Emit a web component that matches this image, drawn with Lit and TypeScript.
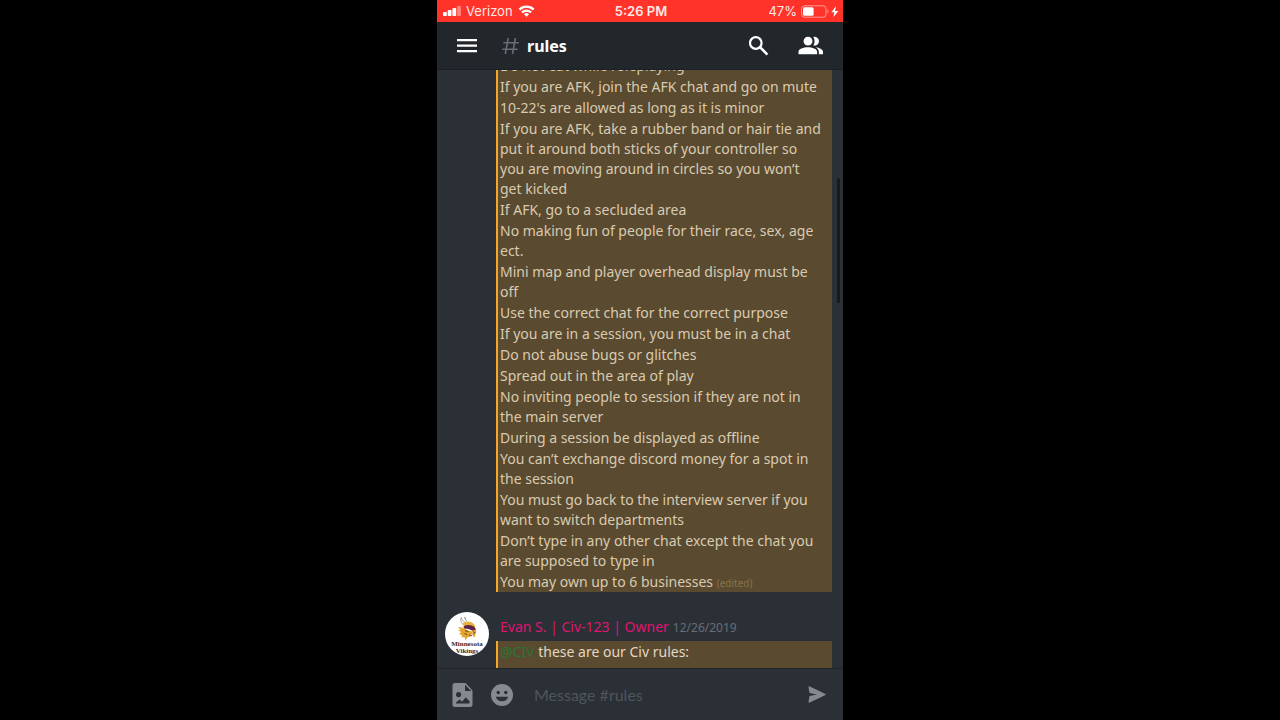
import { LitElement, html, css, svg } from "lit";
import { customElement, property } from "lit/decorators.js";

const RULES: string[] = [
  "Do not eat while roleplaying",
  "If you are AFK, join the AFK chat and go on mute",
  "10-22's are allowed as long as it is minor",
  "If you are AFK, take a rubber band or hair tie and\nput it around both sticks of your controller so\nyou are moving around in circles so you won’t\nget kicked",
  "If AFK, go to a secluded area",
  "No making fun of people for their race, sex, age\nect.",
  "Mini map and player overhead display must be\noff",
  "Use the correct chat for the correct purpose",
  "If you are in a session, you must be in a chat",
  "Do not abuse bugs or glitches",
  "Spread out in the area of play",
  "No inviting people to session if they are not in\nthe main server",
  "During a session be displayed as offline",
  "You can’t exchange discord money for a spot in\nthe session",
  "You must go back to the interview server if you\nwant to switch departments",
  "Don’t type in any other chat except the chat you\nare supposed to type in",
  "You may own up to 6 businesses",
];

@customElement("status-bar")
export class StatusBar extends LitElement {
  static styles = css`
    :host {
      display: grid;
      grid-template-columns: 1fr auto 1fr;
      align-items: center;
      height: 22px;
      padding: 0 4px 0 6px;
      background: #ff3329;
      color: #ffe9e6;
      font: 13px/22px Inter, "Liberation Sans", sans-serif;
    }
    .side {
      display: flex;
      align-items: center;
      gap: 5px;
    }
    .right {
      justify-content: flex-end;
      gap: 4px;
    }
    .time {
      font-weight: 600;
    }
    svg {
      display: block;
      flex: none;
    }
  `;
  render() {
    return html`
      <div class="side">
        <svg width="18" height="10" viewBox="0 0 18 10" fill="#fff">
          <rect x="0" y="6" width="3.8" height="4" rx="0.8" />
          <rect x="4.7" y="4" width="3.8" height="6" rx="0.8" />
          <rect x="9.4" y="2" width="3.8" height="8" rx="0.8" />
          <rect x="14.1" y="0" width="3.8" height="10" rx="0.8" opacity="0.4" />
        </svg>
        <span>Verizon</span>
        <svg width="17" height="12" viewBox="0 0 17 12" fill="none" stroke="#fff" stroke-width="2.3">
          <path d="M1.400 4.600a10 10 0 0 1 14.200 0" />
          <path d="M4 7.500a6.200 6.200 0 0 1 9 0" />
          <path d="M8.500 11.800 6 9.300a3.500 3.500 0 0 1 5 0z" fill="#fff" stroke="none" />
        </svg>
      </div>
      <span class="time">5:26 PM</span>
      <div class="side right">
        <span>47%</span>
        <svg width="38" height="13" viewBox="0 0 38 13">
          <rect x="0.5" y="0.8" width="24.5" height="11.4" rx="3" fill="none" stroke="#fff" stroke-opacity="0.5" />
          <rect x="2" y="2.3" width="10.6" height="8.4" rx="1.5" fill="#fff" />
          <path d="M26.4 4.6v3.8c1.5-.5 1.5-3.3 0-3.8z" fill="#fff" opacity="0.5" />
          <path d="M35 1 30.400 7.200h2.900l-1 5L37.400 6h-3.300z" fill="#fff" />
        </svg>
      </div>
    `;
  }
}

@customElement("channel-header")
export class ChannelHeader extends LitElement {
  @property() channel = "";
  static styles = css`
    :host {
      display: flex;
      align-items: center;
      height: 48px;
      padding: 0 19px;
      background: #22272b;
      border-bottom: 1px solid #1c1f23;
      box-sizing: border-box;
    }
    button {
      padding: 0;
      border: 0;
      background: none;
      color: #fff;
      cursor: pointer;
    }
    svg {
      display: block;
    }
    .hash {
      margin-left: 24px;
    }
    h1 {
      flex: 1;
      margin: 0 0 0 7px;
      color: #fff;
      font: 700 16px/20px "Noto Sans", "Open Sans", sans-serif;
    }
    .people {
      margin-left: 29px;
    }
  `;
  render() {
    return html`
      <button aria-label="Open menu">
        <svg width="22" height="16" viewBox="0 0 22 16" fill="#fff">
          <path d="M1 1h20v2.200H1zM1 6.500h20v2.200H1zM1 12h20v2.200H1z" />
        </svg>
      </button>
      <svg class="hash" width="18" height="18" viewBox="0 0 18 18" fill="none" stroke="#686d75" stroke-width="1.6">
        <path d="M6.2 1 3.3 17M13.4 1 10.5 17M1.4 5.800h15.400M.2 12.200h15.400" />
      </svg>
      <h1>${this.channel}</h1>
      <button aria-label="Search">
        <svg width="20" height="20" viewBox="0 0 20 20" fill="none" stroke="#fff">
          <circle cx="6.800" cy="7" r="5.800" stroke-width="2.2" />
          <path d="m11 11.200 7.400 7.400" stroke-width="2.600" />
        </svg>
      </button>
      <button class="people" aria-label="Member list">
        <svg width="26" height="20" viewBox="0 0 26 20" fill="#fff">
          <circle cx="10" cy="5.2" r="4.4" />
          <path d="M.5 18.200v-2.400c0-3 5-4.600 9.300-4.600s9.300 1.600 9.300 4.600v2.400z" />
          <path d="M15.300 1a4.400 4.400 0 1 1 0 8.400c1.700-2.500 1.700-5.900 0-8.400z" />
          <path d="M17.800 11.200c3.400.5 7.200 2 7.200 4.600v2.400h-4.200v-2.400c0-2-1.100-3.500-3-4.600z" />
        </svg>
      </button>
    `;
  }
}

@customElement("chat-log")
export class ChatLog extends LitElement {
  static styles = css`
    :host {
      position: relative;
      display: flex;
      flex-direction: column;
      justify-content: flex-end;
      overflow: hidden;
      background: #2a3036;
      color: #d9cbb2;
      font: 14px/20px "Noto Sans", "Open Sans", sans-serif;
    }
    .message {
      display: grid;
      grid-template-columns: 50px 1fr;
      column-gap: 1px;
      flex: none;
      padding: 0 11px 0 8px;
    }
    .next {
      padding-top: 20px;
    }
    .body {
      grid-column: 2;
      min-width: 0;
    }
    .mention {
      border-left: 2px solid #f5a72a;
      background: #5a4a2f;
      padding-left: 2px;
    }
    .rules {
      display: grid;
      row-gap: 1px;
      margin: 0;
      padding-top: 0;
      padding-bottom: 0;
      padding-right: 0;
      list-style: none;
    }
    .rules li {
      white-space: pre-line;
    }
    .edited {
      color: #877350;
      font-size: 10px;
      line-height: 10px;
    }
    .avatar {
      display: block;
      width: 44px;
      height: 44px;
    }
    .author {
      display: flex;
      align-items: baseline;
      gap: 4px;
      margin: 5px 0 3px 4px;
    }
    .name {
      color: #e0136f;
      font-weight: 400;
      font-size: 14px;
      margin: 0;
    }
    time {
      color: #686e76;
      font-size: 12px;
    }
    p {
      margin: 0;
    }
    .last {
      padding-top: 1px;
      padding-bottom: 6px;
      color: #e2d8c5;
    }
    .role {
      color: #2a7436;
      text-decoration: none;
    }
    .thumb {
      position: absolute;
      top: 18%;
      right: 3px;
      width: 3px;
      height: 21%;
      min-height: 24px;
      border-radius: 2px;
      background: #171a1e;
    }
  `;

  private avatar() {
    return html`<svg class="avatar" viewBox="0 0 44 44" role="img" aria-label="Minnesota Vikings">
      <circle cx="22" cy="22" r="22" fill="#fff" />
      ${svg`
        <path d="M16.200 5.500c-1.200 2.700-.4 5.600 2.400 7.200l3.200-2.200c-2.500.2-4.600-1.600-5.600-5z" fill="#f7f5f2" stroke="#777" stroke-width=".6" />
        <path d="M19.800 5c.2 1.800.8 2.800 1.800 3.800" fill="none" stroke="#555" stroke-width=".8" />
        <path d="M17 12.500c3-4 9-4.200 12.700.5l1.600 6.500-1.600 6-2-1.500-1-7z" fill="#e9b03a" />
        <path d="M18.500 14.200c3.500-1.800 8-1.400 11.300 1l.8 2.800-3.600.6-3.500-1.600-4.500-.6z" fill="#612646" />
        <path d="M13 15.500c2-.3 3.500-.1 5.500.6l2.600 1.400 3 1.600 2.600.2.600 3-2.400.4.800 2.600-2.600-.6-2.600 3.600-1-3.400-3.200.6 1-2.300-3.300-1.300 2.200-1.800-3-1.600 2.400-.7z" fill="#e3a52e" />
        <path d="m20 18.600 3.500 1M19.500 21.500l2.600 1.200M28 19.500l1.800 1.200-1.600 1.600M24 23l3 .6" fill="none" stroke="#5b3a25" stroke-width=".9" />
        <text x="22" y="34" text-anchor="middle" font-family="Liberation Serif, serif" font-weight="700" font-size="7" fill="#40282f">Minnesota</text>
        <text x="22" y="40.500" text-anchor="middle" font-family="Liberation Serif, serif" font-weight="700" font-size="7" fill="#40282f">Vikings</text>
      `}
    </svg>`;
  }

  render() {
    const last = RULES.length - 1;
    return html`
      <article class="message">
        <ul class="body mention rules">
          ${RULES.map(
            (rule, i) =>
              html`<li>${rule}${i === last ? html` <span class="edited">(edited)</span>` : ""}</li>`
          )}
        </ul>
      </article>
      <article class="message next">
        ${this.avatar()}
        <div class="body">
          <header class="author">
            <h2 class="name">Evan S. | Civ-123 | Owner</h2>
            <time datetime="2019-12-26">12/26/2019</time>
          </header>
          <p class="mention last"><a class="role" href="#civ">@CIV</a> these are our Civ rules:</p>
        </div>
      </article>
      <div class="thumb"></div>
    `;
  }
}

@customElement("message-composer")
export class MessageComposer extends LitElement {
  @property() channel = "";
  static styles = css`
    form {
      display: flex;
      align-items: center;
      height: 52px;
      padding: 0 17px 0 15px;
      box-sizing: border-box;
      border-top: 1px solid #202328;
      background: #2a3036;
    }
    button {
      padding: 0;
      border: 0;
      background: none;
      cursor: pointer;
    }
    svg {
      display: block;
    }
    .emoji {
      margin-left: 18px;
    }
    input {
      flex: 1;
      min-width: 0;
      margin-left: 21px;
      padding: 0;
      border: 0;
      outline: 0;
      background: none;
      color: #dcddde;
      font: 16px/20px Lato, "Noto Sans", sans-serif;
    }
    input::placeholder {
      color: #50555c;
      opacity: 1;
    }
  `;
  render() {
    return html`
      <form @submit=${(e: Event) => e.preventDefault()}>
        <button type="button" aria-label="Add image">
          <svg width="21" height="24" viewBox="0 0 21 24">
            <path fill="#868a90" fill-rule="evenodd" d="M3 0h10.500L20.500 7.500V21.500a2.500 2.500 0 0 1-2.500 2.500H3a2.500 2.500 0 0 1-2.500-2.500V2.500A2.500 2.500 0 0 1 3 0zM13 1.800V8h6.200zM6.600 9a2.600 2.600 0 1 0 0 5.200 2.600 2.600 0 0 0 0-5.200zM4 20.500h13.500v-2.300l-3.700-4-3.800 4.500-2.400-2.200L4 19.500z" />
          </svg>
        </button>
        <button class="emoji" type="button" aria-label="Add emoji">
          <svg width="22" height="22" viewBox="0 0 22 22">
            <circle cx="11" cy="11" r="11" fill="#868a90" />
            <circle cx="7.200" cy="8.500" r="1.700" fill="#2a3036" />
            <circle cx="14.800" cy="8.500" r="1.700" fill="#2a3036" />
            <path d="M4.800 12.700h12.400a6.500 6.500 0 0 1-12.400 0z" fill="#2a3036" />
          </svg>
        </button>
        <input type="text" aria-label="Message" placeholder="Message #${this.channel}" />
        <button type="submit" aria-label="Send">
          <svg width="18" height="17" viewBox="0 0 18 17" fill="#868a90">
            <path d="M.5 1.200C.4.300 1 .1 1.800.4L17 7.700c.8.400.8 1.200 0 1.600L1.800 16.600c-.8.300-1.400.1-1.300-.8L1.500 10l7.500-1.500L1.500 7z" />
          </svg>
        </button>
      </form>
    `;
  }
}

@customElement("app-root")
export class AppRoot extends LitElement {
  static styles = css`
    :host {
      display: flex;
      justify-content: center;
      height: 100vh;
      background: #000;
    }
    .phone {
      display: grid;
      grid-template-rows: auto auto minmax(0, 1fr) auto;
      grid-template-columns: minmax(0, 1fr);
      height: 100%;
      max-width: 100%;
      aspect-ratio: 203 / 360;
    }
  `;
  render() {
    return html`
      <main class="phone">
        <status-bar></status-bar>
        <channel-header channel="rules"></channel-header>
        <chat-log></chat-log>
        <message-composer channel="rules"></message-composer>
      </main>
    `;
  }
}
